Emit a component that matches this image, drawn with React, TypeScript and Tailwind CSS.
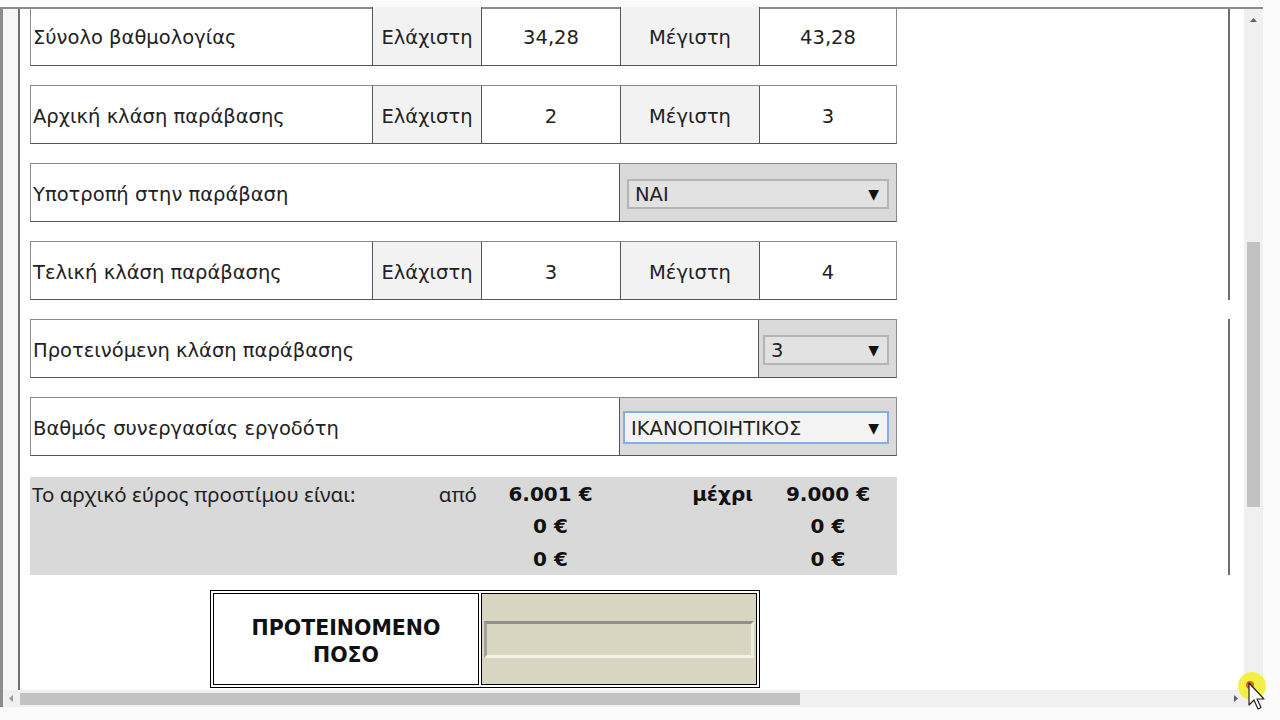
const label = "font-['DejaVu_Sans',sans-serif] text-[19.5px] text-[#222]";

const MinMaxRow = ({ title, min, max, first }: { title: string; min: string; max: string; first?: boolean }) => (
  <div
    className={`flex w-[867px] border border-[#8a8a8a] border-b-[#555] ${first ? "h-[57px] border-t-0 pt-[2px]" : "h-[59px] mt-[19px] pt-[4px]"}`}
  >
    <div className={`w-[341px] flex items-center pl-[2px] ${label}`}>{title}</div>
    <div className={`w-[109px] flex items-center justify-center bg-[#f2f2f2] border-l border-[#555] -mt-[4px] pt-[4px] ${label}`}>Ελάχιστη</div>
    <div className={`w-[139px] flex items-center justify-center border-l border-[#555] -mt-[4px] pt-[4px] ${label}`}>{min}</div>
    <div className={`w-[139px] flex items-center justify-center bg-[#f2f2f2] border-l border-[#555] -mt-[4px] pt-[4px] ${label}`}>Μέγιστη</div>
    <div className={`flex-1 flex items-center justify-center border-l border-[#555] -mt-[4px] pt-[4px] ${label}`}>{max}</div>
  </div>
);

const SelectRow = ({
  title,
  value,
  cellW,
  boxW,
  focus,
}: {
  title: string;
  value: string;
  cellW: string;
  boxW: string;
  focus?: boolean;
}) => (
  <div className="flex w-[867px] h-[59px] mt-[19px] border border-[#8a8a8a] border-b-[#555]">
    <div className={`flex-1 flex items-center pl-[2px] pt-[4px] ${label}`}>{title}</div>
    <div className={`${cellW} flex items-center justify-end pr-[7px] pt-[2px] bg-[#dadada] border-l border-[#555]`}>
      <div
        className={`${boxW} flex items-center justify-between pl-[6px] pr-[8px] pt-[2px] ${
          focus ? "h-[33px] border-2 border-[#86aee3] bg-[#f3f3f3]" : "h-[30px] border-2 border-[#b4b4b4] bg-[#e2e2e2]"
        } ${label}`}
      >
        <span>{value}</span>
        <span className="text-[14px] text-[#111]">▼</span>
      </div>
    </div>
  </div>
);

const Money = "font-['DejaVu_Sans',sans-serif] font-bold text-[20px] text-[#111] text-center";
const Soft = "font-['Noto_Sans',sans-serif] text-[20.5px] text-[#222]";

export default function App() {
  return (
    <div className="w-[1280px] h-[720px] bg-[#fbfbfb] pt-[7px] overflow-hidden relative">
      <div className="w-[1263px] h-[700px] border-t-2 border-l-[3px] border-[#8c8c8c] flex flex-col bg-white">
        <div className="flex flex-1 min-h-0">
          {/* left gutter */}
          <div className="w-[17px] bg-[#f6f6f6] border-r-2 border-[#6e6e6e]" />
          {/* content */}
          <div className="w-[1208px] pl-[10px] flex flex-col">
            <MinMaxRow first title="Σύνολο βαθμολογίας" min="34,28" max="43,28" />
            <MinMaxRow title="Αρχική κλάση παράβασης" min="2" max="3" />
            <SelectRow title="Υποτροπή στην παράβαση" value="ΝΑΙ" cellW="w-[277px]" boxW="w-[262px]" />
            <MinMaxRow title="Τελική κλάση παράβασης" min="3" max="4" />
            <SelectRow title="Προτεινόμενη κλάση παράβασης" value="3" cellW="w-[138px]" boxW="w-[126px]" />
            <SelectRow title="Βαθμός συνεργασίας εργοδότη" value="ΙΚΑΝΟΠΟΙΗΤΙΚΟΣ" cellW="w-[277px]" boxW="w-[266px]" focus />

            {/* fine range box */}
            <div className="w-[867px] h-[98px] mt-[21px] bg-[#d9d9d9] pt-[1px] grid grid-cols-[342px_109px_139px_139px_138px] leading-[32px]">
              <div className={`${Soft} pl-[2px]`}>Το αρχικό εύρος προστίμου είναι:</div>
              <div className={`${Soft} text-right pr-[4px]`}>από</div>
              <div className={Money}>6.001 €</div>
              <div className={`${Money} text-right pr-[6px]`}>μέχρι</div>
              <div className={Money}>9.000 €</div>
              <div />
              <div />
              <div className={Money}>0 €</div>
              <div />
              <div className={Money}>0 €</div>
              <div />
              <div />
              <div className={Money}>0 €</div>
              <div />
              <div className={Money}>0 €</div>
            </div>

            {/* suggested amount */}
            <div className="ml-[180px] mt-[15px] w-[550px] h-[98px] border border-black p-[2px] flex gap-[2px]">
              <div className="w-[266px] border border-black bg-white flex items-center justify-center pt-[5px] text-center font-['DejaVu_Sans',sans-serif] font-bold text-[20.5px] leading-[27px] text-[#111]">
                ΠΡΟΤΕΙΝΟΜΕΝΟ
                <br />
                ΠΟΣΟ
              </div>
              <div className="flex-1 border border-black bg-[#d8d6c1] flex items-center px-[2px]">
                <div className="w-full h-[37px] bg-[#d8d6c1] border-[3px] border-t-[#8f8f8a] border-l-[#a3a29a] border-b-[#f2f1e8] border-r-[#ecebe2]" />
              </div>
            </div>
          </div>
          {/* right side thin rule */}
          <div className="w-[16px] flex flex-col">
            <div className="w-[2px] h-[291px] bg-[#6e6e6e]" />
            <div className="w-[2px] h-[256px] mt-[19px] bg-[#6e6e6e]" />
          </div>
          {/* vertical scrollbar */}
          <div className="w-[19px] bg-[#f0f0f0] flex flex-col items-center">
            <svg width="9" height="6" viewBox="0 0 9 6" className="mt-[8px]">
              <path d="M4.5 1 L8 5 L1 5 Z" fill="#606060" />
            </svg>
            <div className="w-[13px] h-[265px] mt-[219px] bg-[#c2c2c2]" />
          </div>
        </div>
        {/* horizontal scrollbar */}
        <div className="h-[17px] bg-[#f0f0f0] flex items-center relative">
          <svg width="6" height="9" viewBox="0 0 6 9" className="ml-[5px]">
            <path d="M1 4.5 L5 1 L5 8 Z" fill="#9a9a9a" />
          </svg>
          <div className="ml-[6px] w-[780px] h-[12px] bg-[#c2c2c2]" />
          <svg width="6" height="9" viewBox="0 0 6 9" className="ml-auto mr-[24px]">
            <path d="M5 4.5 L1 1 L1 8 Z" fill="#606060" />
          </svg>
        </div>
      </div>

      {/* cursor with click highlight */}
      <svg className="absolute left-[1236px] top-[670px]" width="40" height="45" viewBox="0 0 40 45">
        <circle cx="16" cy="16" r="14" fill="#f4ee2a" opacity="0.85" />
        <circle cx="14" cy="15" r="4" fill="#e0671f" />
        <path
          d="M13 13 L13 35 L18 30 L22 39 L25 37.5 L21 29 L28 29 Z"
          fill="#ffffff"
          stroke="#222"
          strokeWidth="1.2"
          strokeLinejoin="round"
        />
      </svg>
    </div>
  );
}
